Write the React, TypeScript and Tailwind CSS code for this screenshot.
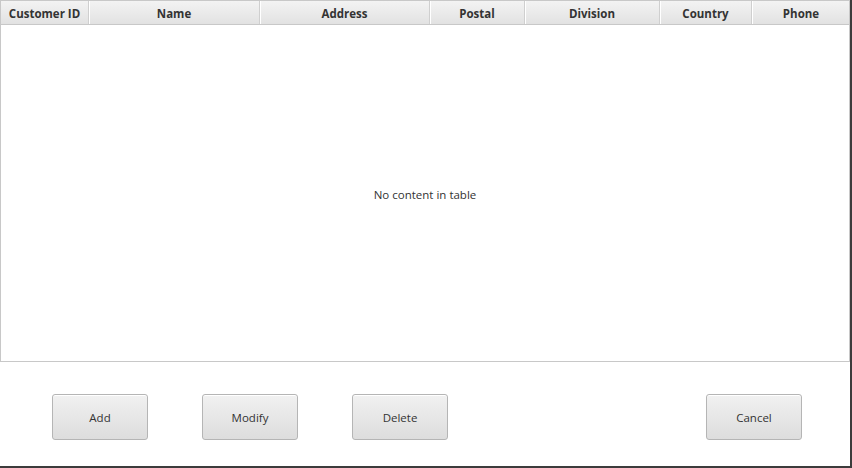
import React from "react";

const cols = [
  { name: "Customer ID", w: 88 },
  { name: "Name", w: 171 },
  { name: "Address", w: 170 },
  { name: "Postal", w: 95 },
  { name: "Division", w: 135 },
  { name: "Country", w: 92 },
  { name: "Phone", w: 98 },
];

function Btn({ label, className = "" }: { label: string; className?: string }) {
  return (
    <button
      className={
        "w-[96px] h-[46px] pt-[2px] rounded-[3px] border border-[#b5b5b5] bg-gradient-to-b from-[#f1f1f1] to-[#dddddd] text-[11.5px] text-[#333333] shadow-[inset_0_1px_0_#ffffff] " +
        className
      }
    >
      {label}
    </button>
  );
}

export default function App() {
  return (
    <div
      className="w-[852px] h-[468px] bg-[#3c3c3c] overflow-hidden"
      style={{ fontFamily: '"Open Sans", "Noto Sans", sans-serif' }}
    >
      <div className="w-[850px] h-[466px] bg-white flex flex-col">
        <div className="h-[362px] border border-[#c8c8c8] flex flex-col">
          <div className="flex h-[24px] border-b border-[#c8c8c8] bg-gradient-to-b from-[#f3f3f3] to-[#e2e2e2]">
            {cols.map((c, i) => (
              <div
                key={c.name}
                style={{ width: c.w }}
                className={
                  "flex items-center justify-center pt-[2px] text-[11.5px] font-bold text-[#333333] shrink-0 " +
                  (i < cols.length - 1 ? "border-r border-[#cfcfcf] shadow-[1px_0_0_#ffffff]" : "grow")
                }
              >
                {c.name}
              </div>
            ))}
          </div>
          <div className="flex-1 flex items-center justify-center pt-[3px] text-[11.5px] text-[#333333]">
            No content in table
          </div>
        </div>
        <div className="flex-1 flex items-center pl-[52px] pr-[48px] pt-[6px]">
          <Btn label="Add" />
          <Btn label="Modify" className="ml-[54px]" />
          <Btn label="Delete" className="ml-[54px]" />
          <Btn label="Cancel" className="ml-auto" />
        </div>
      </div>
    </div>
  );
}
